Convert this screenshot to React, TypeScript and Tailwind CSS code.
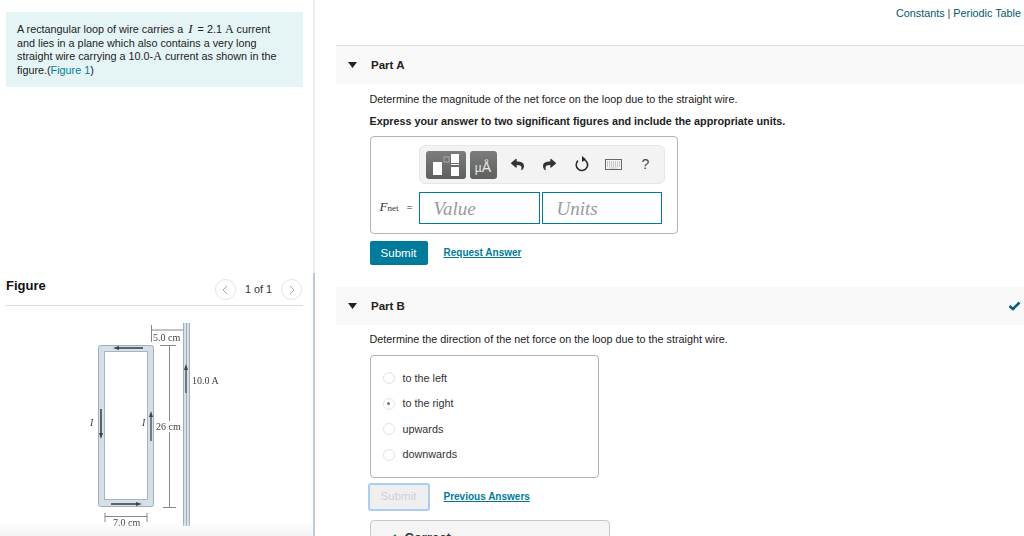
import React from 'react'
import { FaReply, FaShare } from 'react-icons/fa'

function PartBar({ title, done }: { title: string; done?: boolean }) {
  return (
    <div className="h-[38px] bg-[#f9f9f9] flex items-center pl-[12px] pr-[3px]">
      <svg width="9" height="6" viewBox="0 0 9 6" className="mr-[14px]">
        <path d="M0 0H9L4.5 6Z" fill="#222" />
      </svg>
      <span className="font-bold text-[11.5px] text-[#222] mt-[1px]">{title}</span>
      {done && (
        <svg width="13" height="10" viewBox="0 0 13 10" className="ml-auto">
          <path d="M1.5 5L5 8L11.5 1.5" fill="none" stroke="#00607c" strokeWidth="2.6" />
        </svg>
      )}
    </div>
  )
}

function Toolbar() {
  return (
    <div className="ml-[48px] w-[246px] h-[39px] bg-[#f3f3f3] border border-[#e6e6e6] rounded-[6px] flex items-center pl-[6px] text-[#333]">
      <div className="w-[40px] h-[28px] rounded-[3px] bg-gradient-to-b from-[#7d7d7d] to-[#5f5f5f] flex items-center justify-center">
        <svg width="28" height="24" viewBox="0 0 28 24">
          <rect x="1" y="9" width="9" height="13" fill="#fff" />
          <rect x="12" y="4" width="5" height="5" fill="none" stroke="#aaa" strokeWidth="1" />
          <rect x="19" y="1" width="8" height="9" fill="#fff" />
          <rect x="19" y="11" width="8" height="1" fill="#fff" />
          <rect x="19" y="14" width="8" height="9" fill="#fff" />
        </svg>
      </div>
      <div className="ml-[4px] w-[27px] h-[28px] rounded-[3px] bg-gradient-to-b from-[#7d7d7d] to-[#5f5f5f] flex items-end justify-center pb-[5px] text-[#e8e8e8] font-['Liberation_Sans',sans-serif] font-light leading-none">
        <span className="text-[12px]">µ</span>
        <span className="text-[14px]">Å</span>
      </div>
      <FaReply className="ml-[14px] text-[#333]" size={13} />
      <FaShare className="ml-[19px] text-[#333]" size={13} />
      <svg width="16" height="17" viewBox="0 0 16 17" className="ml-[18px]">
        <path d="M9 3.2A5.7 5.7 0 1 1 4 4.6" fill="none" stroke="#2a2a2a" strokeWidth="1.6" />
        <path d="M8 0L12 3.2L8 6Z" fill="#2a2a2a" />
      </svg>
      <svg width="17" height="11" viewBox="0 0 17 11" className="ml-[15px]">
        <rect x="0.5" y="0.5" width="16" height="10" fill="#f5f5f5" stroke="#666" />
        <path d="M2 3H15M2 5H15M2 7H15M4.5 9H12.5" stroke="#999" strokeWidth="1" strokeDasharray="1 1" />
      </svg>
      <span className="ml-[20px] text-[14px] text-[#444]">?</span>
    </div>
  )
}

function Radio({ label, checked }: { label: string; checked?: boolean }) {
  return (
    <div className="h-[25.6px] flex items-center">
      <span className="w-[12px] h-[12px] rounded-full border border-[#e2e2e2] bg-white flex items-center justify-center mr-[8px] ml-[12px]">
        {checked && <span className="w-[3px] h-[3px] rounded-full bg-[#777]" />}
      </span>
      <span className="text-[#333]">{label}</span>
    </div>
  )
}

function LoopFigure() {
  const ink = '#3f4347'
  const serif = { fontFamily: '"Liberation Serif", serif', fontSize: 10, fill: '#444' }
  return (
    <svg width="140" height="211" viewBox="80 322 140 211" className="ml-[80px] blur-[0.3px]">
      <rect x="98.5" y="345.5" width="55" height="161" rx="2" fill="#d3e0ea" stroke="#a3aeb5" />
      <rect x="104.5" y="351.5" width="43" height="148" fill="#fff" stroke="#a9b4bb" />
      <rect x="183" y="323" width="7" height="203" fill="#d3e0ea" />
      <rect x="183" y="323" width="1" height="203" fill="#a3aeb5" />
      <rect x="189" y="323" width="1" height="203" fill="#a3aeb5" />
      <rect x="186" y="323" width="1" height="203" fill="#a3aeb5" />

      <path d="M143 348H118" stroke={ink} strokeWidth="1.6" />
      <path d="M113 348L119 346V350Z" fill={ink} />
      <path d="M101 409V434" stroke={ink} strokeWidth="1.6" />
      <path d="M101 439L99 433H103Z" fill={ink} />
      <path d="M151 441V417" stroke="#6a6f74" strokeWidth="1.8" />
      <path d="M151 411L149 417H153Z" fill={ink} />
      <path d="M111 504H136" stroke={ink} strokeWidth="1.6" />
      <path d="M142 504L136 502V506Z" fill={ink} />
      <path d="M186 393V370" stroke="#6a6f74" strokeWidth="1.8" />
      <path d="M186 364L184 370H188Z" fill={ink} />

      <path d="M151.5 325V342M152 330H183" stroke="#555" strokeWidth="0.7" />
      <path d="M160 345.5H176M163 507.5H176M169.5 346V507" stroke="#555" strokeWidth="0.7" />
      <path d="M105 513V522M147 513V522M105 516.5H147" stroke="#555" strokeWidth="0.7" />
      <text x="153" y="341" style={serif}>5.0 cm</text>
      <rect x="155" y="421" width="27" height="11" fill="#fff" />
      <text x="156" y="430" style={serif}>26 cm</text>
      <text x="192" y="384" style={serif}>10.0 A</text>
      <text x="113" y="526" style={serif}>7.0 cm</text>
      <text x="90" y="426" style={{ ...serif, fontStyle: 'italic' }}>I</text>
      <text x="142" y="426" style={{ ...serif, fontStyle: 'italic' }}>I</text>
    </svg>
  )
}

export default function App() {
  return (
    <div className="w-[1024px] h-[536px] overflow-hidden bg-white flex font-['Liberation_Sans',Arial,sans-serif] text-[10.8px] leading-[13.5px] text-[#222]">
      {/* left column */}
      <div className="relative w-[315px] h-full shrink-0 flex flex-col">
        <div className="h-[273px] border-r-2 border-[#e9eff5] pt-[12px] pl-[6px] pr-[9px]">
          <div className="w-[297px] h-[75px] bg-[#e5f5f6] pl-[11px] pr-[6px] pt-[11px]">
            A rectangular loop of wire carries a{' '}
            <i className="font-['Liberation_Serif',serif] text-[13px] leading-[12px] mx-[2px]">I</i> = 2.1{' '}
            <span className="font-['Liberation_Serif',serif] text-[12px] leading-[12px]">A</span> current
            <br />
            and lies in a plane which also contains a very long
            <br />
            straight wire carrying a 10.0-
            <span className="font-['Liberation_Serif',serif] text-[12px] leading-[12px]">A</span> current as shown in the
            <br />
            figure.(<span className="text-[#007b9c]">Figure 1</span>)
          </div>
        </div>
        <div className="flex-1 border-r-2 border-r-[#bcc9d8] pl-[6px] pr-[9px]">
          <div className="w-[297px] h-[33px] border-b border-[#dcdcdc] flex items-start">
            <span className="font-bold text-[13px] leading-[25px] text-[#111]">Figure</span>
            <div className="ml-auto mt-[6px] mr-[1px] flex items-center text-[#333]">
              <span className="w-[21px] h-[21px] rounded-full border border-[#e3e3e3] flex items-center justify-center">
                <svg width="6" height="10" viewBox="0 0 6 10"><path d="M5 1L1 5L5 9" fill="none" stroke="#aaa" /></svg>
              </span>
              <span className="mx-[9px]">1 of 1</span>
              <span className="w-[21px] h-[21px] rounded-full border border-[#e3e3e3] flex items-center justify-center">
                <svg width="6" height="10" viewBox="0 0 6 10"><path d="M1 1L5 5L1 9" fill="none" stroke="#aaa" /></svg>
              </span>
            </div>
          </div>
          <div className="mt-[16px] -ml-[6px]">
            <LoopFigure />
          </div>
        </div>
        <div className="absolute left-0 right-[2px] bottom-0 h-[14px] bg-gradient-to-b from-transparent to-[#f3f3f3]" />
      </div>

      {/* right column */}
      <div className="flex-1 min-w-0 pl-[21px]">
        <div className="h-[45px] pt-[7px] pr-[3px] text-right text-[#00596e]">
          Constants <span className="text-[#444]">|</span> Periodic Table
        </div>
        <div className="border-t border-[#dedede]">
          <PartBar title="Part A" />
        </div>
        <div className="pl-[33.5px]">
          <p className="mt-[9px]">Determine the magnitude of the net force on the loop due to the straight wire.</p>
          <p className="mt-[8px] font-bold">Express your answer to two significant figures and include the appropriate units.</p>
          <div className="mt-[8px] w-[308px] h-[98px] border border-[#b4b4b4] rounded-[4px] pt-[8px]">
            <Toolbar />
            <div className="mt-[8px] flex items-center h-[32px]">
              <span className="ml-[9px] w-[39px] flex items-baseline font-['Liberation_Serif',serif] text-[#333]">
                <i className="text-[13px]">F</i>
                <span className="text-[9px]">net</span>
                <span className="text-[11px] ml-[8px]">=</span>
              </span>
              <div className="w-[121px] h-[32px] border border-[#007b9c] pl-[14px] pt-[1px] flex items-center font-['Liberation_Serif',serif] italic text-[19px] text-[#9a9a9a]">Value</div>
              <div className="ml-[2px] w-[120px] h-[32px] border border-[#007b9c] pl-[14px] pt-[1px] flex items-center font-['Liberation_Serif',serif] italic text-[19px] text-[#9a9a9a]">Units</div>
            </div>
          </div>
          <div className="mt-[7px] flex items-center">
            <div className="w-[58px] h-[24px] rounded-[2px] bg-[#007b9c] text-white text-[11.5px] pt-[1px] flex items-center justify-center">Submit</div>
            <span className="ml-[16px] font-bold text-[10px] text-[#007b9c] underline">Request Answer</span>
          </div>
        </div>
        <div className="mt-[22px]">
          <PartBar title="Part B" done />
        </div>
        <div className="pl-[33.5px]">
          <p className="mt-[8px]">Determine the direction of the net force on the loop due to the straight wire.</p>
          <div className="mt-[8px] w-[229px] h-[123px] border border-[#b4b4b4] rounded-[4px] pt-[10px]">
            <Radio label="to the left" />
            <Radio label="to the right" checked />
            <Radio label="upwards" />
            <Radio label="downwards" />
          </div>
          <div className="mt-[5px] -ml-[2px] flex items-center">
            <div className="w-[62px] h-[28px] rounded-[3px] bg-[#efefef] border-2 border-[#a9cdf8] text-[#d0d0d0] text-[11.5px] flex items-center justify-center">Submit</div>
            <span className="ml-[14px] font-bold text-[10px] text-[#007b9c] underline">Previous Answers</span>
          </div>
          <div className="mt-[9px] w-[240px] h-[40px] bg-[#f5f5f5] border border-[#c8c8c8] rounded-[4px] pl-[15px] pt-[10px] text-[13px] font-bold text-[#333] flex items-start gap-[8px]">
            <svg width="11" height="10" viewBox="0 0 13 10" className="mt-[2px]">
              <path d="M1.5 5L5 8L11.5 1.5" fill="none" stroke="#2f7d32" strokeWidth="2.6" />
            </svg>
            Correct
          </div>
        </div>
      </div>
    </div>
  )
}
